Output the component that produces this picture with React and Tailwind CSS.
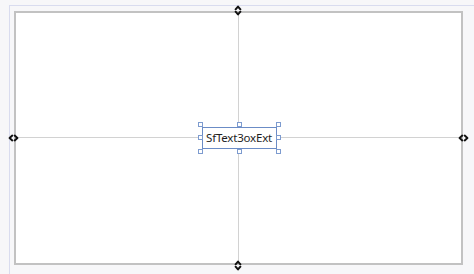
import React from "react"

function ResizeGlyph({ vertical, className }) {
    // small black double-chevron used by the designer for edge resizing
    return vertical ? (
        <svg width="8" height="11" viewBox="0 0 8 11" className={className}>
            <path d="M1.6 4.3 L4 1.6 L6.4 4.3" fill="none" stroke="#111" strokeWidth="2" strokeLinecap="round" strokeLinejoin="round" />
            <path d="M1.6 6.7 L4 9.4 L6.4 6.7" fill="none" stroke="#111" strokeWidth="2" strokeLinecap="round" strokeLinejoin="round" />
        </svg>
    ) : (
        <svg width="11" height="8" viewBox="0 0 11 8" className={className}>
            <path d="M4.3 1.6 L1.6 4 L4.3 6.4" fill="none" stroke="#111" strokeWidth="2" strokeLinecap="round" strokeLinejoin="round" />
            <path d="M6.7 1.6 L9.4 4 L6.7 6.4" fill="none" stroke="#111" strokeWidth="2" strokeLinecap="round" strokeLinejoin="round" />
        </svg>
    )
}

function Handle({ className }) {
    return <div className={`absolute w-[5px] h-[5px] bg-white border border-[#7d9bcf] ${className}`} />
}

export default function App() {
    return (
        <div
            className="relative w-[474px] h-[274px] bg-[#f7f7f9] pl-[14px] pt-[11px] overflow-hidden"
            style={{ fontFamily: '"Noto Sans", "Open Sans", sans-serif' }}
        >
            {/* outer guide lines */}
            <div className="absolute left-[9px] top-[5px] bottom-0 w-px bg-[#d9dcef]" />
            <div className="absolute left-[9px] top-[5px] right-0 h-px bg-[#d9dcef]" />

            {/* design surface */}
            <div className="relative w-[449px] h-[254px] bg-white border-2 border-[#c2c2c2] flex items-center justify-center">
                {/* crosshair */}
                <div className="absolute left-[222px] top-0 bottom-0 w-px bg-[#d2d2d2]" />
                <div className="absolute left-0 right-0 top-[124px] h-px bg-[#d2d2d2]" />

                {/* selected control */}
                <div className="relative w-[79px] h-[28px] ml-px mt-[-1px] flex items-center justify-center">
                    <div className="w-[75px] h-[22px] bg-white border-[1.5px] border-[#6b8cc6] flex items-center justify-center">
                        <span className="text-[11.5px] leading-none text-[#1e1e1e] tracking-[-0.2px]">SfText3oxExt</span>
                    </div>
                    <Handle className="left-[-2px] top-[-2px]" />
                    <Handle className="left-[37px] top-[-2px]" />
                    <Handle className="right-[-2px] top-[-2px]" />
                    <Handle className="left-[-2px] top-[11px]" />
                    <Handle className="right-[-2px] top-[11px]" />
                    <Handle className="left-[-2px] bottom-[-2px]" />
                    <Handle className="left-[37px] bottom-[-2px]" />
                    <Handle className="right-[-2px] bottom-[-2px]" />
                </div>

                {/* edge resize glyphs */}
                <ResizeGlyph vertical className="absolute left-[218px] top-[-8px]" />
                <ResizeGlyph vertical className="absolute left-[218px] bottom-[-8px]" />
                <ResizeGlyph className="absolute left-[-8px] top-[121px]" />
                <ResizeGlyph className="absolute right-[-8px] top-[121px]" />
            </div>
        </div>
    )
}
